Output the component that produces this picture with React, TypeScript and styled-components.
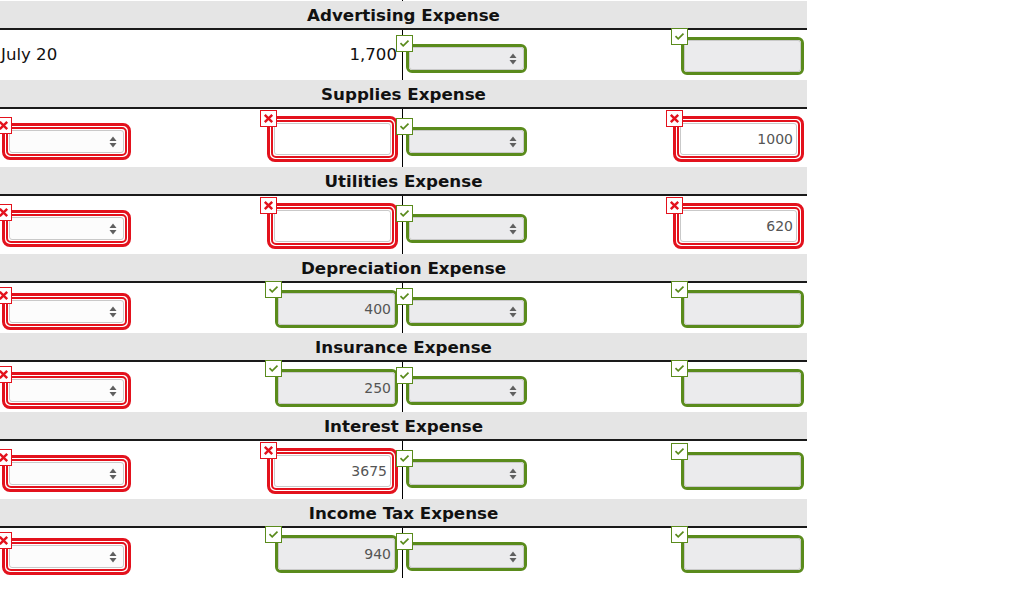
import React from "react";
import styled, { createGlobalStyle, css } from "styled-components";

const GREEN = "#5a8b1c";
const RED = "#e3121d";

const GlobalStyle = createGlobalStyle`
  html, body { margin: 0; padding: 0; background: #fff; }
  body { font-family: "DejaVu Sans", Verdana, sans-serif; color: #111; }
`;

type Cell =
  | { kind: "text"; text: string }
  | { kind: "select"; ok: boolean }
  | { kind: "input"; ok: boolean; value: string };

type Account = { title: string; cells: [Cell, Cell, Cell, Cell] };

const accounts: Account[] = [
  {
    title: "Advertising Expense",
    cells: [
      { kind: "text", text: "July 20" },
      { kind: "text", text: "1,700" },
      { kind: "select", ok: true },
      { kind: "input", ok: true, value: "" },
    ],
  },
  {
    title: "Supplies Expense",
    cells: [
      { kind: "select", ok: false },
      { kind: "input", ok: false, value: "" },
      { kind: "select", ok: true },
      { kind: "input", ok: false, value: "1000" },
    ],
  },
  {
    title: "Utilities Expense",
    cells: [
      { kind: "select", ok: false },
      { kind: "input", ok: false, value: "" },
      { kind: "select", ok: true },
      { kind: "input", ok: false, value: "620" },
    ],
  },
  {
    title: "Depreciation Expense",
    cells: [
      { kind: "select", ok: false },
      { kind: "input", ok: true, value: "400" },
      { kind: "select", ok: true },
      { kind: "input", ok: true, value: "" },
    ],
  },
  {
    title: "Insurance Expense",
    cells: [
      { kind: "select", ok: false },
      { kind: "input", ok: true, value: "250" },
      { kind: "select", ok: true },
      { kind: "input", ok: true, value: "" },
    ],
  },
  {
    title: "Interest Expense",
    cells: [
      { kind: "select", ok: false },
      { kind: "input", ok: false, value: "3675" },
      { kind: "select", ok: true },
      { kind: "input", ok: true, value: "" },
    ],
  },
  {
    title: "Income Tax Expense",
    cells: [
      { kind: "select", ok: false },
      { kind: "input", ok: true, value: "940" },
      { kind: "select", ok: true },
      { kind: "input", ok: true, value: "" },
    ],
  },
];

const Page = styled.div`
  width: 807px;
`;

const TopStub = styled.div`
  height: 1px;
  width: 1px;
  margin-left: 402px;
  background: #000;
`;

const Header = styled.div`
  height: 27px;
  background: #e5e5e5;
  border-bottom: 2px solid #1a1a1a;
  display: flex;
  align-items: center;
  justify-content: center;
  font-family: "DejaVu Sans", Verdana, sans-serif;
  font-weight: bold;
  font-size: 16.7px;
  color: #111;
`;

const Row = styled.div`
  display: grid;
  grid-template-columns: 402px 405px;
`;

const Half = styled.div<{ $right?: boolean }>`
  display: flex;
  align-items: center;
  justify-content: space-between;
  padding: 7px 4px 5px 2px;
  ${(p) =>
    p.$right &&
    css`
      border-left: 1px solid #000;
      padding: 7px 3px 5px 3px;
    `}
`;

const PlainText = styled.span<{ $amount?: boolean }>`
  font-family: "DejaVu Sans", Verdana, sans-serif;
  font-size: 16.6px;
  color: #111;
  margin-left: ${(p) => (p.$amount ? "0" : "-1px")};
  margin-right: ${(p) => (p.$amount ? "1px" : "0")};
  margin-bottom: 3px;
`;

const Frame = styled.div<{ $ok: boolean; $select?: boolean }>`
  position: relative;
  display: flex;
  ${(p) =>
    p.$ok
      ? css`
          border: 3px solid ${GREEN};
          border-radius: 6px;
        `
      : css`
          border: 3px solid ${RED};
          border-radius: 8px;
          padding: 1px;
          background: #fff;
        `}
  ${(p) =>
    p.$select &&
    css`
      margin-top: 2.5px;
      margin-bottom: -2.5px;
    `}
`;

const InnerRing = styled.div`
  display: flex;
  border: 2px solid ${RED};
  border-radius: 5px;
  padding: 1px;
`;

const SelectBox = styled.div<{ $ok: boolean }>`
  box-sizing: border-box;
  width: 115px;
  height: 23px;
  border: 1px solid #c9c9c9;
  border-radius: 3px;
  background: ${(p) => (p.$ok ? "#ebebed" : "#fcfcfc")};
  display: flex;
  align-items: center;
  justify-content: flex-end;
  padding-right: 6px;
`;

const TextBox = styled.input<{ $ok: boolean }>`
  box-sizing: border-box;
  width: 117px;
  height: 32px;
  margin: 0;
  border: 1px solid #c9c9c9;
  border-radius: 3px;
  background: ${(p) => (p.$ok ? "#ebebed" : "#ffffff")};
  text-align: right;
  padding: 0 3px;
  font-family: "DejaVu Sans", Verdana, sans-serif;
  font-size: 14px;
  color: #555;
  outline: none;
`;

const Badge = styled.span<{ $ok: boolean }>`
  position: absolute;
  box-sizing: border-box;
  width: 17px;
  height: 17px;
  top: ${(p) => (p.$ok ? "-12px" : "-9px")};
  left: ${(p) => (p.$ok ? "-13px" : "-10px")};
  border: 1px solid ${(p) => (p.$ok ? GREEN : RED)};
  background: #fff;
  display: flex;
  align-items: center;
  justify-content: center;
  z-index: 2;
`;

const Arrows = () => (
  <svg width="8" height="12" viewBox="0 0 8 12">
    <path d="M4 0.5 L7.5 5 L0.5 5 Z" fill="#5f5f5f" />
    <path d="M4 11.5 L7.5 7 L0.5 7 Z" fill="#5f5f5f" />
  </svg>
);

const CheckIcon = () => (
  <svg width="11" height="9" viewBox="0 0 11 9">
    <path
      d="M1.5 4.2 L4.2 6.8 L9.5 1.6"
      fill="none"
      stroke={GREEN}
      strokeWidth="1.7"
    />
  </svg>
);

const CrossIcon = () => (
  <svg width="11" height="11" viewBox="0 0 11 11">
    <path
      d="M1.8 1.8 L9.2 9.2 M9.2 1.8 L1.8 9.2"
      fill="none"
      stroke={RED}
      strokeWidth="2.4"
    />
  </svg>
);

const StatusBadge = ({ ok }: { ok: boolean }) => (
  <Badge $ok={ok}>{ok ? <CheckIcon /> : <CrossIcon />}</Badge>
);

const Field = ({ cell, amount }: { cell: Cell; amount?: boolean }) => {
  if (cell.kind === "text") {
    return <PlainText $amount={amount}>{cell.text}</PlainText>;
  }
  const control =
    cell.kind === "select" ? (
      <SelectBox $ok={cell.ok} role="combobox">
        <Arrows />
      </SelectBox>
    ) : (
      <TextBox $ok={cell.ok} readOnly value={cell.value} />
    );
  return (
    <Frame $ok={cell.ok} $select={cell.kind === "select"}>
      <StatusBadge ok={cell.ok} />
      {cell.ok ? control : <InnerRing>{control}</InnerRing>}
    </Frame>
  );
};

export default function App() {
  return (
    <>
      <GlobalStyle />
      <Page>
        <TopStub />
        {accounts.map((a) => (
          <React.Fragment key={a.title}>
            <Header>{a.title}</Header>
            <Row>
              <Half>
                <Field cell={a.cells[0]} />
                <Field cell={a.cells[1]} amount />
              </Half>
              <Half $right>
                <Field cell={a.cells[2]} />
                <Field cell={a.cells[3]} amount />
              </Half>
            </Row>
          </React.Fragment>
        ))}
      </Page>
    </>
  );
}
